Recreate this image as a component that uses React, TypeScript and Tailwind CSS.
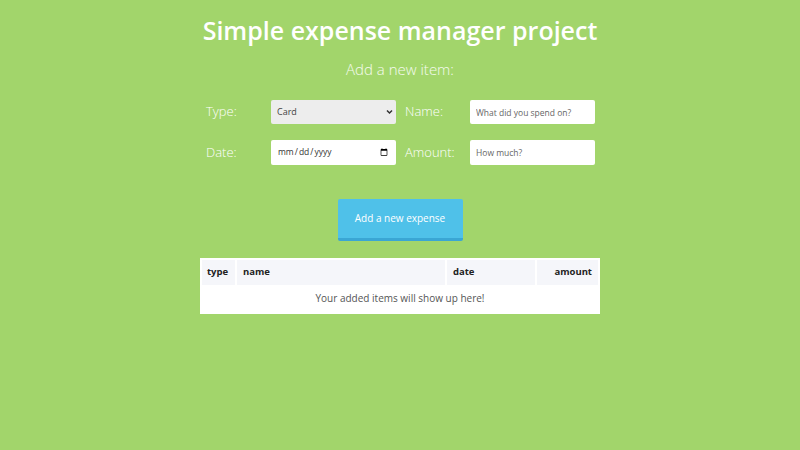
export default function App() {
  return (
    <div className="min-h-[450px] w-full bg-[#a2d56b] font-['Open_Sans',sans-serif] text-white">
      <div className="mx-auto w-[400px] pt-[13px]">
        <h1 className="-mx-[20px] whitespace-nowrap text-center text-[25px] font-semibold leading-[34px]">
          Simple expense manager project
        </h1>
        <p className="mt-[12px] text-center text-[15px] font-light leading-[20px] text-white/90">Add a new item:</p>

        <div className="mt-[21px] flex flex-col gap-[16px]">
          <div className="flex items-center">
            <label className="w-[71px] pl-[6px] text-[13px] font-light">Type:</label>
            <div className="relative h-[24px] w-[125px]">
              <select className="block h-[24px] w-[125px] appearance-none rounded-[2px] border-0 bg-[#ededed] px-[6px] text-[9px] text-[#444] outline-none">
                <option>Card</option>
                <option>Cash</option>
              </select>
              <svg
                className="pointer-events-none absolute right-[3px] top-[9px] h-[6px] w-[7px]"
                viewBox="0 0 7 6"
                fill="none"
                stroke="#333"
                strokeWidth="1.5"
              >
                <path d="M1 1.5 3.5 4 6 1.5" />
              </svg>
            </div>
            <label className="w-[74px] pl-[9px] text-[13px] font-light">Name:</label>
            <input
              className="h-[24px] w-[125px] rounded-[2px] bg-white px-[6px] text-[8.5px] text-[#444] outline-none placeholder:text-[#666]"
              placeholder="What did you spend on?"
            />
          </div>
          <div className="flex items-center">
            <label className="w-[71px] pl-[6px] text-[13px] font-light">Date:</label>
            <input
              type="date"
              className="h-[25px] w-[125px] rounded-[2px] bg-white px-[6px] text-[8.5px] text-[#333] outline-none"
            />
            <label className="w-[74px] pl-[9px] text-[13px] font-light">Amount:</label>
            <input
              className="h-[25px] w-[125px] rounded-[2px] bg-white px-[6px] text-[8.5px] text-[#444] outline-none placeholder:text-[#666]"
              placeholder="How much?"
            />
          </div>
        </div>

        <div className="mt-[34px] flex justify-center">
          <button className="h-[42px] w-[125px] rounded-[2px] border-b-[3px] border-[#3aa6d4] bg-[#4fc1e9] text-[10px] text-white">
            Add a new expense
          </button>
        </div>

        <div className="mt-[17px] bg-white p-[2px]">
          <div className="flex gap-[2px] text-[9.5px] font-bold text-[#222]">
            <div className="flex h-[25px] w-[33px] items-center bg-[#f5f6fa] pl-[5px]">type</div>
            <div className="flex h-[25px] w-[208px] items-center bg-[#f5f6fa] pl-[6px]">name</div>
            <div className="flex h-[25px] w-[88px] items-center bg-[#f5f6fa] pl-[6px]">date</div>
            <div className="flex h-[25px] flex-1 items-center justify-end bg-[#f5f6fa] pr-[6px]">amount</div>
          </div>
          <div className="flex h-[27px] items-center justify-center text-[10px] text-[#555]">
            Your added items will show up here!
          </div>
        </div>
      </div>
    </div>
  );
}
